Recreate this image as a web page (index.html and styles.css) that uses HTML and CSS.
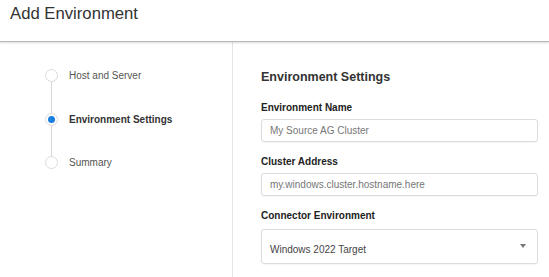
FILE: index.html
```html
<!DOCTYPE html>
<html lang="en">
<head>
    <meta charset="UTF-8">
    <meta name="viewport" content="width=device-width, initial-scale=1.0">
    <title>Add Environment</title>
    <link rel="stylesheet" href="styles.css">
</head>
<body>

    <div class="header">
        <h1 class="header-title">Add Environment</h1>
    </div>

    <div class="wizard">
        <div class="steps-panel">
            <ul class="steps">
                <li class="step">
                    <span class="step-dot"></span>
                    <span class="step-label">Host and Server</span>
                </li>
                <li class="step active">
                    <span class="step-dot"></span>
                    <span class="step-label">Environment Settings</span>
                </li>
                <li class="step">
                    <span class="step-dot"></span>
                    <span class="step-label">Summary</span>
                </li>
            </ul>
        </div>

        <div class="form-panel">
            <h2 class="form-title">Environment Settings</h2>

            <div class="field">
                <label class="field-label">Environment Name</label>
                <input class="text-input" type="text" placeholder="My Source AG Cluster">
            </div>

            <div class="field">
                <label class="field-label">Cluster Address</label>
                <input class="text-input" type="text" placeholder="my.windows.cluster.hostname.here">
            </div>

            <div class="field">
                <label class="field-label select-label">Connector Environment</label>
                <div class="select-box">
                    <span class="select-value">Windows 2022 Target</span>
                    <span class="select-arrow"></span>
                </div>
            </div>
        </div>
    </div>

</body>
</html>
```

FILE: styles.css
```css
body {
    margin: 0;
    padding: 0;
    font-family: Arial, 'Liberation Sans', Helvetica, sans-serif;
    color: #333;
    background-color: #fff;
    height: 277px;
    overflow: hidden;
}

/* --- Header --- */
.header {
    height: 42px;
    box-sizing: border-box;
    padding: 4px 10px 0;
    border-bottom: 1px solid #b9b9b9;
    box-shadow: 0 1px 2px rgba(0, 0, 0, 0.15);
    position: relative;
    z-index: 2;
}

.header-title {
    margin: 0;
    font-size: 16.7px;
    line-height: 20px;
    font-weight: normal;
    color: #333;
}

/* --- Wizard layout --- */
.wizard {
    display: flex;
    height: 235px;
}

.steps-panel {
    width: 232px;
    flex-shrink: 0;
    border-right: 1px solid #e4e4e4;
    padding-top: 12px;
}

.steps {
    list-style: none;
    margin: 0;
    padding: 0 0 0 45px;
    position: relative;
}

/* connector line behind the dots */
.steps::before {
    content: '';
    position: absolute;
    left: 51px;
    top: 22px;
    height: 87px;
    width: 1px;
    background-color: #d9d9d9;
}

.step {
    display: flex;
    align-items: center;
    height: 43.5px;
    position: relative;
}

.step-dot {
    width: 13px;
    height: 13px;
    box-sizing: border-box;
    border: 1px solid #dcdcdc;
    border-radius: 50%;
    background-color: #fff;
    display: flex;
    align-items: center;
    justify-content: center;
    flex-shrink: 0;
}

.step.active .step-dot::after {
    content: '';
    width: 7px;
    height: 7px;
    border-radius: 50%;
    background-color: #1b7fe0;
}

.step-label {
    margin-left: 11px;
    font-size: 10px;
    color: #555;
}

.step.active .step-label {
    font-weight: bold;
    color: #333;
}

/* --- Form --- */
.form-panel {
    flex: 1;
    padding: 27px 11px 0 28px;
}

.form-title {
    margin: 0 0 16px;
    font-size: 12.5px;
    line-height: 16px;
    font-weight: bold;
    color: #333;
}

.field {
    margin-bottom: 13px;
}

.field-label {
    display: block;
    font-size: 10px;
    line-height: 14px;
    font-weight: bold;
    color: #222;
    margin-bottom: 4px;
}

.select-label {
    margin-bottom: 6px;
}

.text-input {
    display: block;
    width: 100%;
    height: 23px;
    box-sizing: border-box;
    margin: 0;
    padding: 0 8px;
    border: 1px solid #dcdcdc;
    border-radius: 3px;
    box-shadow: 0 1px 1px rgba(0, 0, 0, 0.04);
    font-family: Arial, 'Liberation Sans', Helvetica, sans-serif;
    font-size: 10px;
    color: #333;
    outline: none;
}

.text-input::placeholder {
    color: #777;
}

.select-box {
    height: 35px;
    box-sizing: border-box;
    border: 1px solid #dcdcdc;
    border-radius: 3px;
    box-shadow: 0 1px 1px rgba(0, 0, 0, 0.04);
    display: flex;
    align-items: center;
    justify-content: space-between;
    padding: 5px 11px 0 8px;
}

.select-value {
    font-size: 10px;
    color: #444;
}

.select-arrow {
    width: 0;
    height: 0;
    border-left: 3.5px solid transparent;
    border-right: 3.5px solid transparent;
    border-top: 4px solid #777;
    margin-bottom: 6px;
}
```
